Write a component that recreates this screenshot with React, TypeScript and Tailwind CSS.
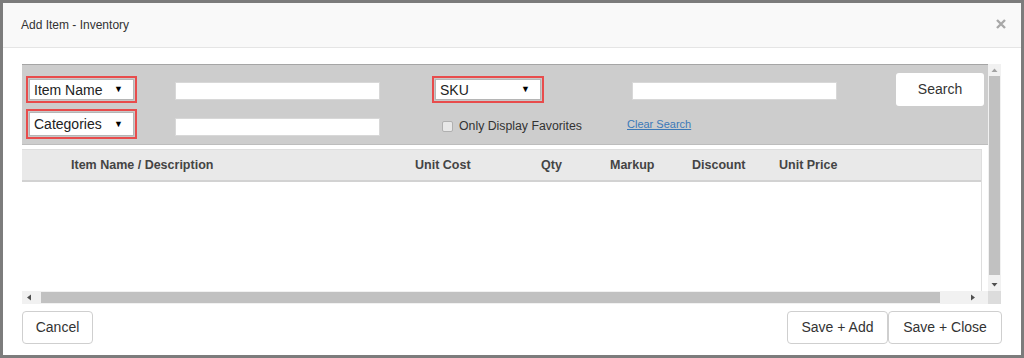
import type { ReactNode } from 'react'

function MarkedSelect({ label, width, height }: { label: string; width: string; height: string }) {
  return (
    <div className={`${width} ${height} border-2 border-[#e84c4c] bg-[#c8c8c8] p-[1px]`}>
      <div className="flex h-full items-center justify-between border border-[#b5b5b5] bg-white pl-[4px] pr-[10px] pt-[1px] text-[14px] text-[#222]">
        <span>{label}</span>
        <span className="text-[9px] text-black">▼</span>
      </div>
    </div>
  )
}

function TextBox({ className = '' }: { className?: string }) {
  return <div className={`h-[18px] w-[205px] border border-[#d8d8d8] bg-white ${className}`} />
}

function FooterButton({ children, className = '' }: { children: ReactNode; className?: string }) {
  return (
    <button
      type="button"
      className={`h-[33px] rounded-[4px] border border-[#cfcfcf] bg-white text-[14px] text-[#333] ${className}`}
    >
      {children}
    </button>
  )
}

const columns = [
  { label: 'Item Name / Description', width: 'w-[344px]' },
  { label: 'Unit Cost', width: 'w-[126px]' },
  { label: 'Qty', width: 'w-[69px]' },
  { label: 'Markup', width: 'w-[82px]' },
  { label: 'Discount', width: 'w-[87px]' },
  { label: 'Unit Price', width: 'w-[90px]' },
]

export default function App() {
  return (
    <div
      className="flex h-[358px] w-[1024px] flex-col border-[3px] border-[#7c7c7c] bg-white"
      style={{ fontFamily: '"Liberation Sans", Arial, sans-serif' }}
    >
      <div className="flex h-[45px] shrink-0 items-center justify-between border-b border-[#e5e5e5] bg-[#f9f9f9] pl-[18px] pr-[15px]">
        <h1 className="text-[12px] text-[#333]">Add Item - Inventory</h1>
        <svg width="10" height="10" viewBox="0 0 10 10" className="mt-[-2px]">
          <path d="M1 1L9 9M9 1L1 9" stroke="#a8a8a8" strokeWidth="2.4" />
        </svg>
      </div>

      <div className="flex flex-1 flex-col pl-[19px] pt-[16px]">
        <div className="flex h-[240px]">
          <div className="flex w-[966px] flex-col">
            <div className="flex h-[81px] border-t border-[#a5a5a5] border-b border-b-[#bdbdbd] bg-[#cdcdcd] pl-[4px] pt-[11px]">
              <div className="flex w-[149px] flex-col gap-[6px]">
                <MarkedSelect label="Item Name" width="w-[111px]" height="h-[27px]" />
                <MarkedSelect label="Categories" width="w-[111px]" height="h-[30px]" />
              </div>
              <div className="flex w-[257px] flex-col pt-[6px]">
                <TextBox />
                <TextBox className="mt-[18px]" />
              </div>
              <div className="flex w-[200px] flex-col">
                <MarkedSelect label="SKU" width="w-[112px]" height="h-[27px]" />
                <label className="mt-[14px] flex items-center pl-[10px] text-[12.3px] text-[#333]">
                  <span className="mr-[6px] h-[11px] w-[11px] rounded-[2px] border border-[#b0b0b0] bg-[#e8e8e8]" />
                  Only Display Favorites
                </label>
              </div>
              <div className="flex w-[264px] flex-col pt-[6px]">
                <TextBox />
                <span className="ml-[-5px] mt-[16px] text-[11px] text-[#3b79b8] underline">Clear Search</span>
              </div>
              <div>
                <button
                  type="button"
                  className="mt-[-3px] h-[33px] w-[88px] rounded-[3px] bg-white text-[14px] text-[#333]"
                >
                  Search
                </button>
              </div>
            </div>

            <div className="mt-[4px] flex w-[960px] flex-1 flex-col border-r border-[#dedede]">
              <div className="flex h-[33px] items-center border-t border-[#dedede] border-b-2 border-b-[#d2d2d2] bg-[#e9e9e9] pl-[49px] text-[12.5px] font-bold text-[#444]">
                {columns.map((c) => (
                  <span key={c.label} className={`${c.width} shrink-0`}>
                    {c.label}
                  </span>
                ))}
              </div>
              <div className="flex-1 bg-white" />
            </div>

            <div className="flex h-[13px] items-center bg-[#f1f1f1]">
              <svg width="19" height="13" viewBox="0 0 19 13">
                <path d="M5 6.5L9 3.5V9.5Z" fill="#505050" />
              </svg>
              <div className="h-[11px] w-[899px] bg-[#c1c1c1]" />
              <div className="flex-1" />
              <svg width="13" height="13" viewBox="0 0 13 13">
                <path d="M4 3.5L8 6.5L4 9.5Z" fill="#505050" />
              </svg>
              <div className="w-[8px]" />
            </div>
          </div>

          <div className="flex w-[13px] flex-col">
            <div className="flex flex-1 flex-col items-center bg-[#f1f1f1]">
              <svg width="13" height="12" viewBox="0 0 13 12">
                <path d="M3.5 8L6.5 4.5L9.5 8Z" fill="#a3a3a3" />
              </svg>
              <div className="h-[199px] w-[11px] bg-[#c1c1c1]" />
              <div className="flex-1" />
              <svg width="13" height="12" viewBox="0 0 13 12">
                <path d="M3.5 4L6.5 7.5L9.5 4Z" fill="#505050" />
              </svg>
            </div>
            <div className="h-[13px] bg-[#dcdcdc]" />
          </div>
        </div>

        <div className="mt-[7px] flex w-[980px] justify-between">
          <FooterButton className="w-[71px]">Cancel</FooterButton>
          <div className="flex">
            <FooterButton className="w-[101px]">Save + Add</FooterButton>
            <FooterButton className="w-[114px]">Save + Close</FooterButton>
          </div>
        </div>
      </div>
    </div>
  )
}
